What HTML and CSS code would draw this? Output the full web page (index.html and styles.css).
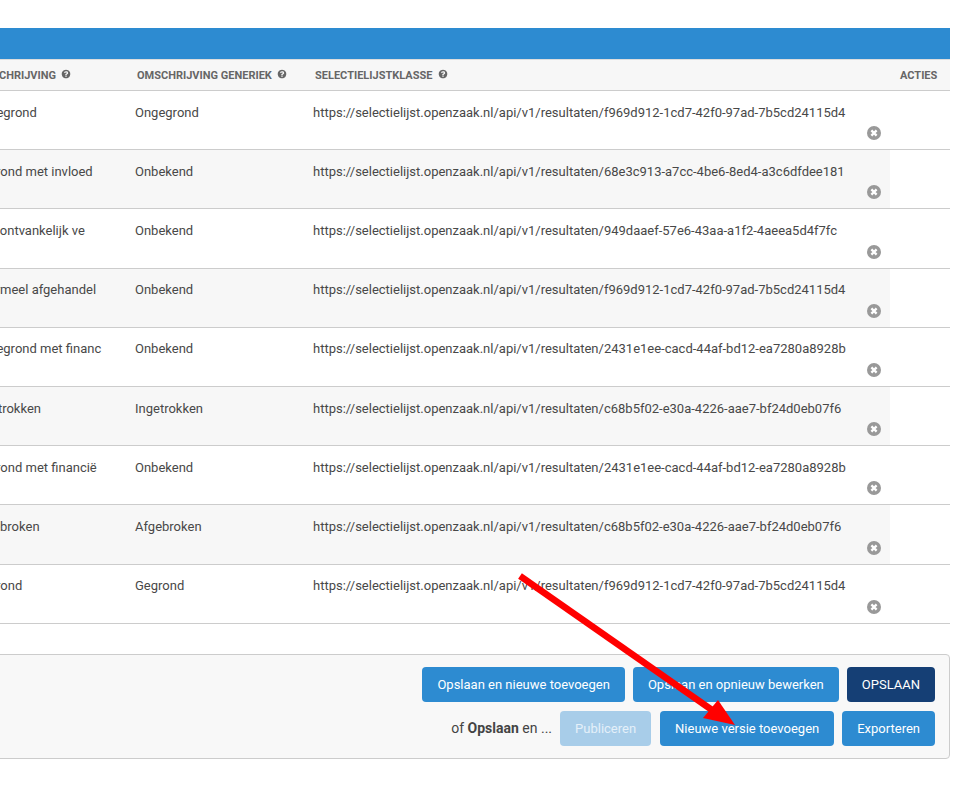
FILE: index.html
```html
<!DOCTYPE html>
<html lang="en">
<head>
    <meta charset="UTF-8">
    <meta name="viewport" content="width=device-width, initial-scale=1.0">
    <title>Resultaattypen</title>
    <link rel="stylesheet" href="styles.css">
</head>
<body>
    <!-- Icons used in the table -->
    <svg class="icon-defs" xmlns="http://www.w3.org/2000/svg">
        <symbol id="icon-help" viewBox="0 0 1792 1792">
            <path d="M1024 1376v-192q0-14-9-23t-23-9h-192q-14 0-23 9t-9 23v192q0 14 9 23t23 9h192q14 0 23-9t9-23zm256-672q0-88-55.5-163t-138.5-116-170-41q-243 0-371 213-15 24 8 42l132 100q7 6 19 6 16 0 25-12 53-68 86-92 34-24 86-24 48 0 85.5 26t37.5 59q0 38-20 61t-68 45q-63 28-115.5 86.5t-52.5 125.5v36q0 14 9 23t23 9h192q14 0 23-9t9-23q0-19 21.5-49.5t54.5-49.5q32-18 49-28.5t46-35 44.5-48 28-60.5 12.5-81zm384 192q0 209-103 385.5t-279.5 279.5-385.5 103-385.5-103-279.5-279.5-103-385.5 103-385.5 279.5-279.5 385.5-103 385.5 103 279.5 279.5 103 385.5z"/>
        </symbol>
        <symbol id="icon-remove" viewBox="0 0 14 14">
            <circle cx="7" cy="7" r="7" fill="#999"/>
            <path d="M4.4 4.4l5.2 5.2M9.6 4.4l-5.2 5.2" stroke="#fff" stroke-width="2.3" fill="none"/>
        </symbol>
    </svg>

    <div class="page">
        <div class="table-bar"></div>

        <div class="row head-row">
            <div class="head-cell">Omschrijving <svg class="help"><use href="#icon-help"/></svg></div>
            <div class="head-cell">Omschrijving generiek <svg class="help"><use href="#icon-help"/></svg></div>
            <div class="head-cell">Selectielijstklasse <svg class="help"><use href="#icon-help"/></svg></div>
            <div class="head-cell"></div>
            <div class="head-cell head-actions">Acties</div>
        </div>

        <div class="row">
            <div class="cell">Ongegrond</div>
            <div class="cell">Ongegrond</div>
            <div class="cell">https://selectielijst.openzaak.nl/api/v1/resultaten/f969d912-1cd7-42f0-97ad-7b5cd24115d4</div>
            <div class="cell remove"><svg class="remove-icon"><use href="#icon-remove"/></svg></div>
        </div>
        <div class="row">
            <div class="cell">Gegrond met invloed</div>
            <div class="cell">Onbekend</div>
            <div class="cell">https://selectielijst.openzaak.nl/api/v1/resultaten/68e3c913-a7cc-4be6-8ed4-a3c6dfdee181</div>
            <div class="cell remove"><svg class="remove-icon"><use href="#icon-remove"/></svg></div>
        </div>
        <div class="row">
            <div class="cell">Niet ontvankelijk ve</div>
            <div class="cell">Onbekend</div>
            <div class="cell">https://selectielijst.openzaak.nl/api/v1/resultaten/949daaef-57e6-43aa-a1f2-4aeea5d4f7fc</div>
            <div class="cell remove"><svg class="remove-icon"><use href="#icon-remove"/></svg></div>
        </div>
        <div class="row">
            <div class="cell">Informeel afgehandel</div>
            <div class="cell">Onbekend</div>
            <div class="cell">https://selectielijst.openzaak.nl/api/v1/resultaten/f969d912-1cd7-42f0-97ad-7b5cd24115d4</div>
            <div class="cell remove"><svg class="remove-icon"><use href="#icon-remove"/></svg></div>
        </div>
        <div class="row">
            <div class="cell">Ongegrond met financ</div>
            <div class="cell">Onbekend</div>
            <div class="cell">https://selectielijst.openzaak.nl/api/v1/resultaten/2431e1ee-cacd-44af-bd12-ea7280a8928b</div>
            <div class="cell remove"><svg class="remove-icon"><use href="#icon-remove"/></svg></div>
        </div>
        <div class="row">
            <div class="cell">Ingetrokken</div>
            <div class="cell">Ingetrokken</div>
            <div class="cell">https://selectielijst.openzaak.nl/api/v1/resultaten/c68b5f02-e30a-4226-aae7-bf24d0eb07f6</div>
            <div class="cell remove"><svg class="remove-icon"><use href="#icon-remove"/></svg></div>
        </div>
        <div class="row">
            <div class="cell">Gegrond met financië</div>
            <div class="cell">Onbekend</div>
            <div class="cell">https://selectielijst.openzaak.nl/api/v1/resultaten/2431e1ee-cacd-44af-bd12-ea7280a8928b</div>
            <div class="cell remove"><svg class="remove-icon"><use href="#icon-remove"/></svg></div>
        </div>
        <div class="row">
            <div class="cell">Afgebroken</div>
            <div class="cell">Afgebroken</div>
            <div class="cell">https://selectielijst.openzaak.nl/api/v1/resultaten/c68b5f02-e30a-4226-aae7-bf24d0eb07f6</div>
            <div class="cell remove"><svg class="remove-icon"><use href="#icon-remove"/></svg></div>
        </div>
        <div class="row">
            <div class="cell">Gegrond</div>
            <div class="cell">Gegrond</div>
            <div class="cell">https://selectielijst.openzaak.nl/api/v1/resultaten/f969d912-1cd7-42f0-97ad-7b5cd24115d4</div>
            <div class="cell remove"><svg class="remove-icon"><use href="#icon-remove"/></svg></div>
        </div>

        <div class="submit-row">
            <div class="submit-line">
                <a class="btn">Opslaan en nieuwe toevoegen</a>
                <a class="btn">Opslaan en opnieuw bewerken</a>
                <a class="btn btn-default">OPSLAAN</a>
            </div>
            <div class="submit-line">
                <span class="hint">of <strong>Opslaan</strong> en ...</span>
                <a class="btn btn-disabled">Publiceren</a>
                <a class="btn">Nieuwe versie toevoegen</a>
                <a class="btn">Exporteren</a>
            </div>
        </div>
    </div>

    <!-- Annotation drawn over the screenshot -->
    <svg class="annotation" xmlns="http://www.w3.org/2000/svg">
        <line x1="520" y1="576" x2="712" y2="710" stroke="#f00" stroke-width="6.5"/>
        <polygon points="718,700 703,718 735,725" fill="#f00"/>
    </svg>
</body>
</html>
```

FILE: styles.css
```css
html, body {
    margin: 0;
    padding: 0;
    background: #fff;
    overflow: hidden;
}

body {
    position: relative;
    height: 804px;
    padding-top: 28px;
    box-sizing: border-box;
    font-family: Roboto, "Liberation Sans", sans-serif;
    font-size: 13px;
    color: #484848;
}

.icon-defs {
    display: none;
}

/* The page is scrolled sideways, so the first column is cut off */
.page {
    width: 987px;
    margin-left: -37px;
}

.table-bar {
    height: 31px;
    background: #2d8bd1;
}

.row {
    display: grid;
    grid-template-columns: 162px 178px 557px 30px 60px;
    height: 59.2px;
    box-sizing: border-box;
    border-bottom: 1px solid #ccc;
}

.row:nth-child(even) .cell {
    background: #f7f7f7;
}

.head-row {
    height: 32px;
    border-top: 1px solid #ddd;
    background: #f7f7f7;
    border-bottom: 1px solid #ccc;
}

.head-cell {
    padding: 9px 0 0 12px;
    font-size: 11px;
    line-height: 13px;
    font-weight: 700;
    color: #666;
    text-transform: uppercase;
    white-space: nowrap;
}

.head-actions {
    padding-left: 10px;
}

.help {
    width: 10px;
    height: 10px;
    margin-left: 2.5px;
    fill: #666;
    vertical-align: 0;
}

.cell {
    padding: 13.6px 0 0 10px;
    line-height: 16px;
    white-space: nowrap;
}

.remove {
    display: flex;
    align-items: flex-end;
    padding: 0 0 9px 7px;
}

.remove-icon {
    width: 14px;
    height: 14px;
}

.submit-row {
    display: flex;
    flex-direction: column;
    gap: 9px;
    height: 105px;
    margin-top: 30px;
    padding: 12px 14px 0 0;
    box-sizing: border-box;
    background: #f8f8f8;
    border: 1px solid #ccc;
    border-radius: 4px;
}

.submit-line {
    display: flex;
    justify-content: flex-end;
    align-items: center;
    gap: 8px;
}

.btn {
    height: 35px;
    padding: 0 15px;
    box-sizing: border-box;
    line-height: 35px;
    background: #2d8bd1;
    color: #fff;
    border-radius: 4px;
    white-space: nowrap;
}

.btn-default {
    background: #153f75;
}

.btn-disabled {
    margin-right: 1px;
    background: #a8cde9;
    color: #e4f0f9;
}

.hint {
    font-size: 14px;
    color: #444;
}

.annotation {
    position: absolute;
    top: 0;
    left: 0;
    width: 953px;
    height: 804px;
    pointer-events: none;
}
```
